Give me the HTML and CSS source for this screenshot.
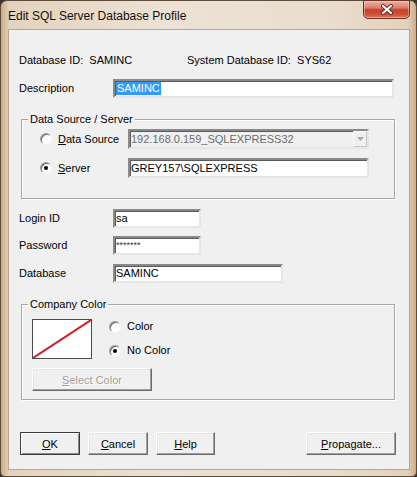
FILE: index.html
```html
<!DOCTYPE html>
<html lang="en">
<head>
    <meta charset="UTF-8">
    <title>Edit SQL Server Database Profile</title>
    <link rel="stylesheet" href="styles.css">
</head>
<body>

<div class="window">
    <div class="titlebar">
        <span class="title">Edit SQL Server Database Profile</span>
        <button class="close" title="Close">
            <svg width="14" height="11" viewBox="0 0 14 11">
                <path d="M3 2 L11 9 M11 2 L3 9" stroke="#5b2a20" stroke-width="4" stroke-linecap="round"/>
                <path d="M3 2 L11 9 M11 2 L3 9" stroke="#fff" stroke-width="2.2" stroke-linecap="round"/>
            </svg>
        </button>
    </div>

    <div class="client">
        <div class="ids">
            <span class="db-id">Database ID:&nbsp; SAMINC</span>
            <span>System Database ID:&nbsp; SYS62</span>
        </div>

        <div class="row desc-row">
            <label class="label">Description</label>
            <div class="edit desc"><span class="selected">SAMINC</span></div>
        </div>

        <fieldset class="group source">
            <legend>Data Source / Server</legend>
            <div class="src-row first">
                <span class="option"><span class="radio"></span><u>D</u>ata Source</span>
                <div class="edit combo disabled">
                    <span>192.168.0.159_SQLEXPRESS32</span>
                    <span class="drop">
                        <svg width="7" height="4" viewBox="0 0 7 4"><path d="M0 0 H7 L3.5 4 Z" fill="#a8a8a8"/></svg>
                    </span>
                </div>
            </div>
            <div class="src-row second">
                <span class="option"><span class="radio checked"></span><u>S</u>erver</span>
                <div class="edit combo">GREY157\SQLEXPRESS</div>
            </div>
        </fieldset>

        <div class="row login-row">
            <label class="label">Login ID</label>
            <div class="edit short">sa</div>
        </div>
        <div class="row pass-row">
            <label class="label">Password</label>
            <div class="edit short stars">*******</div>
        </div>
        <div class="row db-row">
            <label class="label">Database</label>
            <div class="edit medium">SAMINC</div>
        </div>

        <fieldset class="group company">
            <legend>Company Color</legend>
            <div class="color-body">
                <div class="color-top">
                    <div class="swatch">
                        <svg width="58" height="38" viewBox="0 0 58 38">
                            <line x1="0" y1="38" x2="58" y2="0" stroke="#d0202a" stroke-width="2"/>
                        </svg>
                    </div>
                    <div class="color-opts">
                        <span class="option"><span class="radio"></span>Color</span>
                        <span class="option"><span class="radio checked"></span>No Color</span>
                    </div>
                </div>
                <button class="btn select-color" disabled><u>S</u>elect Color</button>
            </div>
        </fieldset>

        <div class="buttons">
            <button class="btn default"><u>O</u>K</button>
            <button class="btn"><u>C</u>ancel</button>
            <button class="btn help"><u>H</u>elp</button>
            <button class="btn propagate"><u>P</u>ropagate...</button>
        </div>
    </div>
</div>

</body>
</html>
```

FILE: styles.css
```css
html, body {
    margin: 0;
    padding: 0;
    height: 100%;
    background-color: #3a3530; /* shows through the rounded corners */
}

.window {
    box-sizing: border-box;
    height: 100%;
    display: flex;
    flex-direction: column;
    border: 1px solid #5e4c3a;
    border-radius: 7px 7px 5px 5px;
    background: linear-gradient(to right, #cdac86 0, #e3d2bd 8px, #ece2d5 40%, #e9ddcd 80%, #e2d0bb calc(100% - 8px), #cdac86 100%);
    font-family: "Liberation Sans", Arial, sans-serif;
    font-size: 11px;
    color: #000;
}

/* Title bar */
.titlebar {
    height: 28px;
    display: flex;
    align-items: flex-start;
    justify-content: space-between;
    padding: 0 6px 0 7px;
}

.title {
    font-size: 12px;
    line-height: 14px;
    padding-top: 8px;
    color: #111;
}

.close {
    width: 47px;
    height: 19px;
    margin-top: -1px;
    padding: 0;
    border: 1px solid #6d3125;
    border-radius: 0 0 5px 5px;
    background: linear-gradient(#eab1a3 0, #dc7f6b 40%, #c3422c 52%, #cc5238 80%, #dd7b60 100%);
    box-shadow: inset 0 0 0 1px rgba(255, 220, 210, 0.45);
    display: flex;
    align-items: center;
    justify-content: center;
}

/* Dialog client area */
.client {
    flex: 1;
    margin: 0 6px 6px 7px;
    padding: 0 14px 0 10px;
    background-color: #f0f0f0;
    border: 1px solid #b3a695;
    display: flex;
    flex-direction: column;
}

.ids {
    display: flex;
    margin-top: 24px;
    line-height: 13px;
}

.db-id {
    width: 168px;
}

.row {
    display: flex;
    align-items: center;
}

.label {
    width: 94px;
    line-height: 13px;
}

.desc-row { margin-top: 12px; }
.login-row { margin-top: 10px; }
.pass-row { margin-top: 8px; }
.db-row { margin-top: 9px; }

/* Sunken edit boxes */
.edit {
    box-sizing: border-box;
    height: 19px;
    padding: 0 3px 0 1px;
    background-color: #fff;
    border: 2px solid;
    border-color: #8a8a8a #e6e6e6 #e6e6e6 #8a8a8a;
    box-shadow: inset 1px 1px 0 #5a5a5a;
    display: flex;
    align-items: center;
    white-space: nowrap;
    overflow: hidden;
    line-height: 13px;
}

.desc { width: 281px; }
.short { width: 88px; }
.medium { width: 170px; }

.stars {
    font-size: 9px;
    letter-spacing: 0;
    color: #333;
}

.selected {
    background-color: #3399ff;
    color: #fff;
    padding: 0 1px;
}

/* Group boxes */
.group {
    margin: 15px 0 0 2px;
    padding: 0 0 0 6px;
    border: 1px solid #a7a7a7;
    box-shadow: 1px 1px 0 #fff, inset 1px 1px 0 #fff;
    min-width: 0;
}

.group legend {
    padding: 0 2px;
    line-height: 13px;
}

.source {
    padding-bottom: 20px;
}

.src-row {
    display: flex;
    align-items: center;
    padding-left: 12px;
}

.src-row.first { margin-top: 3px; }
.src-row.second { margin-top: 9px; }

.src-row .option {
    width: 88px;
}

.combo {
    width: 241px;
    height: 20px;
    padding-left: 1px;
}

.combo.disabled {
    background-color: #f0f0f0;
    color: #6d6d6d;
    justify-content: space-between;
    padding-right: 0;
}

.drop {
    box-sizing: border-box;
    width: 14px;
    height: 16px;
    border: 1px solid;
    border-color: #fafafa #c8c8c8 #c8c8c8 #fafafa;
    background-color: #f0f0f0;
    display: flex;
    align-items: center;
    justify-content: center;
}

/* Radio buttons */
.option {
    display: flex;
    align-items: center;
    line-height: 13px;
}

.radio {
    box-sizing: border-box;
    width: 12px;
    height: 12px;
    margin-right: 6px;
    border-radius: 50%;
    background-color: #fff;
    border: 1px solid;
    border-color: #9a9a9a #f4f4f4 #f4f4f4 #9a9a9a;
    box-shadow: inset 1px 1px 0 #6a6a6a;
    display: flex;
    align-items: center;
    justify-content: center;
}

.radio.checked::after {
    content: "";
    width: 4px;
    height: 4px;
    border-radius: 50%;
    background-color: #000;
}

/* Company colour */
.company {
    padding-bottom: 8px;
}

.color-body {
    padding-left: 4px;
}

.color-top {
    display: flex;
    margin-top: 8px;
}

.swatch {
    width: 58px;
    height: 38px;
    border: 1px solid #4a4a4a;
    background-color: #fff;
}

.swatch svg {
    display: block;
}

.color-opts {
    display: flex;
    flex-direction: column;
    gap: 11px;
    margin: 1px 0 0 17px;
}

/* Push buttons */
.btn {
    box-sizing: border-box;
    width: 60px;
    height: 23px;
    padding: 0;
    font-family: inherit;
    font-size: 11px;
    color: #000;
    background-color: #f0f0f0;
    border: 1px solid;
    border-color: #fff #6b6b6b #6b6b6b #fff;
    box-shadow: inset -1px -1px 0 #a0a0a0, inset 1px 1px 0 #e6e6e6;
}

.btn.default {
    border-color: #3c3c3c;
    box-shadow: inset 1px 1px 0 #fff, inset -1px -1px 0 #8a8a8a;
}

.select-color {
    display: block;
    width: 120px;
    margin-top: 9px;
    color: #a0a0a0;
    text-shadow: 1px 1px 0 #fff;
}

.buttons {
    display: flex;
    gap: 8px;
    margin-top: 32px;
    padding-left: 1px;
}

.btn.help { width: 59px; }

.btn.propagate {
    width: 90px;
    margin-left: auto;
    margin-right: -1px;
}
```
